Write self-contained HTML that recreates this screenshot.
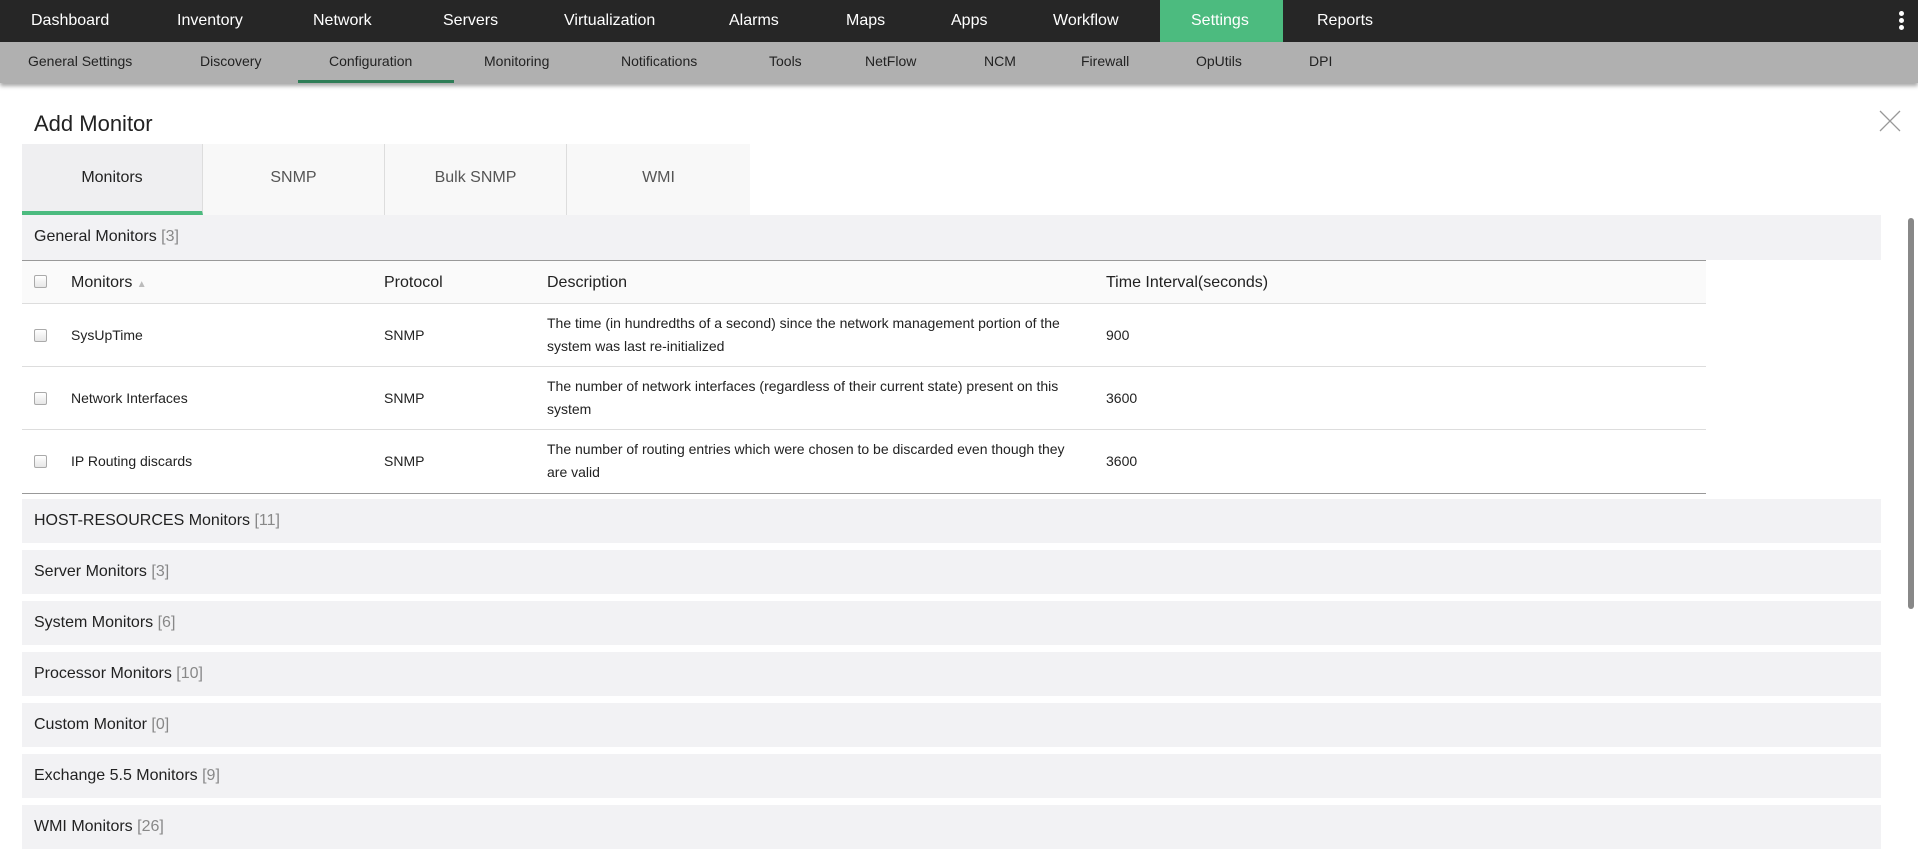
<!DOCTYPE html>
<html><head><meta charset="utf-8"><style>
*{margin:0;padding:0;box-sizing:border-box}
body{width:1918px;height:853px;overflow:hidden;background:#fff;font-family:"Liberation Sans",sans-serif;color:#222;position:relative}
.top{position:absolute;left:0;top:0;width:1918px;height:42px;background:#262626}
.top span{position:absolute;top:0;line-height:42px;color:#fff;font-size:16px}
.set{position:absolute;left:1160px;top:0;width:123px;height:42px;background:#4cbb7f}
.dots{position:absolute;left:1899px;top:11px;width:5px}
.dots i{display:block;width:5px;height:5px;border-radius:50%;background:#fff;margin-bottom:2px}
.sub{position:absolute;left:0;top:42px;width:1918px;height:41px;background:#b0b0b0;box-shadow:0 3px 4px rgba(0,0,0,.35)}
.sub span{position:absolute;top:0;line-height:38px;color:#222;font-size:14px}
.ul{position:absolute;left:298px;top:80px;width:156px;height:3px;background:#2e7d57}
.title{position:absolute;left:34px;top:111px;font-size:22px;color:#222}
.x{position:absolute;left:1879px;top:110px}
.tab{position:absolute;top:144px;height:71px;background:#f8f8f8;border-right:1px solid #ddd;text-align:center;line-height:68px;font-size:16px;color:#555}
.tab.a{background:#efeff1;color:#222;border-bottom:4px solid #4cbb7f}
.sec{position:absolute;left:22px;width:1859px;height:44px;background:#f2f2f4;font-size:16px;line-height:44px;padding-left:12px;color:#222}
.sec b{font-weight:normal;color:#888}
.tbl{position:absolute;left:22px;top:260px;width:1684px;border-top:1px solid #999;border-bottom:1px solid #999}
.row{position:relative;height:63px;border-bottom:1px solid #ddd;font-size:14px}
.row:last-child{border-bottom:none}
.hd{height:43px;background:#fafafa;font-size:16px}
.row div{position:absolute;top:0}
.cb{position:absolute;left:12px;width:13px;height:13px;border:1px solid #aaa;border-radius:2px;background:linear-gradient(#fff,#e6e6e6)}
.sb{position:absolute;left:1908px;top:218px;width:6px;height:391px;background:#888;border-radius:3px}
</style></head><body>
<div class="top">
<div class="set"></div>
<span style="left:31px">Dashboard</span><span style="left:177px">Inventory</span><span style="left:313px">Network</span><span style="left:443px">Servers</span><span style="left:564px">Virtualization</span><span style="left:729px">Alarms</span><span style="left:846px">Maps</span><span style="left:951px">Apps</span><span style="left:1053px">Workflow</span><span style="left:1191px">Settings</span><span style="left:1317px">Reports</span>
<div class="dots"><i></i><i></i><i></i></div>
</div>
<div class="sub">
<span style="left:28px">General Settings</span><span style="left:200px">Discovery</span><span style="left:329px">Configuration</span><span style="left:484px">Monitoring</span><span style="left:621px">Notifications</span><span style="left:769px">Tools</span><span style="left:865px">NetFlow</span><span style="left:984px">NCM</span><span style="left:1081px">Firewall</span><span style="left:1196px">OpUtils</span><span style="left:1309px">DPI</span>
</div>
<div class="ul"></div>
<div class="title">Add Monitor</div>
<svg class="x" width="22" height="22"><path d="M1 1L21 21M21 1L1 21" stroke="#999" stroke-width="1.3"/></svg>
<div class="tab a" style="left:22px;width:181px">Monitors</div>
<div class="tab" style="left:203px;width:182px">SNMP</div>
<div class="tab" style="left:385px;width:182px">Bulk SNMP</div>
<div class="tab" style="left:567px;width:183px;border-right:none">WMI</div>
<div class="sec" style="top:215px;height:45px">General Monitors <b>[3]</b></div>
<div class="tbl">
<div class="row hd"><span class="cb" style="top:14px"></span><div style="left:49px;line-height:43px">Monitors <span style="color:#bbb;font-size:10px">▲</span></div><div style="left:362px;line-height:43px">Protocol</div><div style="left:525px;line-height:43px">Description</div><div style="left:1084px;line-height:43px">Time Interval(seconds)</div></div>
<div class="row"><span class="cb" style="top:25px"></span><div style="left:49px;line-height:63px">SysUpTime</div><div style="left:362px;line-height:63px">SNMP</div><div style="left:525px;top:8px;line-height:23px;width:540px">The time (in hundredths of a second) since the network management portion of the system was last re-initialized</div><div style="left:1084px;line-height:63px">900</div></div>
<div class="row"><span class="cb" style="top:25px"></span><div style="left:49px;line-height:63px">Network Interfaces</div><div style="left:362px;line-height:63px">SNMP</div><div style="left:525px;top:8px;line-height:23px;width:540px">The number of network interfaces (regardless of their current state) present on this system</div><div style="left:1084px;line-height:63px">3600</div></div>
<div class="row"><span class="cb" style="top:25px"></span><div style="left:49px;line-height:63px">IP Routing discards</div><div style="left:362px;line-height:63px">SNMP</div><div style="left:525px;top:8px;line-height:23px;width:540px">The number of routing entries which were chosen to be discarded even though they are valid</div><div style="left:1084px;line-height:63px">3600</div></div>
</div>
<div class="sec" style="top:499px">HOST-RESOURCES Monitors <b>[11]</b></div>
<div class="sec" style="top:550px">Server Monitors <b>[3]</b></div>
<div class="sec" style="top:601px">System Monitors <b>[6]</b></div>
<div class="sec" style="top:652px">Processor Monitors <b>[10]</b></div>
<div class="sec" style="top:703px">Custom Monitor <b>[0]</b></div>
<div class="sec" style="top:754px">Exchange 5.5 Monitors <b>[9]</b></div>
<div class="sec" style="top:805px">WMI Monitors <b>[26]</b></div>
<div class="sb"></div>
</body></html>
